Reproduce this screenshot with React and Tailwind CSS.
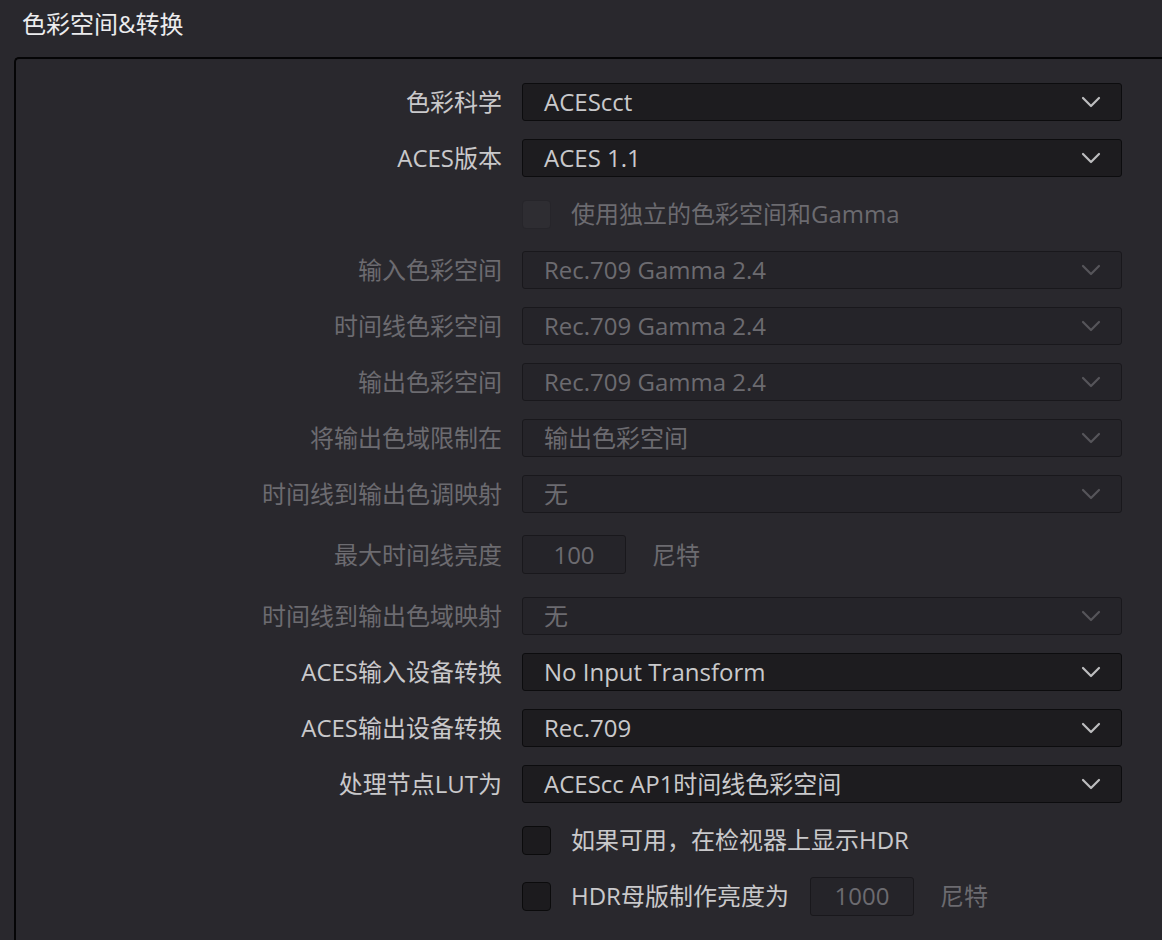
import React from "react";

const FONT = { fontFamily: '"Open Sans", "Noto Sans CJK SC", sans-serif' };

function Chevron({ disabled }) {
  return (
    <svg width="20" height="12" viewBox="0 0 20 12" className="shrink-0">
      <path
        d="M2 2 L10 10 L18 2"
        fill="none"
        stroke={disabled ? "#56555a" : "#bdbdbf"}
        strokeWidth="2.2"
        strokeLinecap="round"
        strokeLinejoin="round"
      />
    </svg>
  );
}

function Select({ value, disabled }) {
  return (
    <div
      className={
        "h-[38px] w-full rounded-[3px] border flex items-center justify-between pl-[21px] pr-[20px] " +
        (disabled
          ? "bg-[#252429] border-[#19181c] text-[#6c6b70]"
          : "bg-[#1d1c1f] border-[#0c0c0e] text-[#c9c9cb]")
      }
    >
      <span className="leading-none">{value}</span>
      <Chevron disabled={disabled} />
    </div>
  );
}

function Checkbox({ disabled }) {
  return (
    <div
      className={
        "w-[29px] h-[29px] rounded-[4px] border shrink-0 " +
        (disabled
          ? "bg-[#2e2d32] border-[#26252a]"
          : "bg-[#1c1b1e] border-[#0b0b0c]")
      }
    />
  );
}

function NumBox({ value, disabled }) {
  return (
    <div
      className={
        "h-[39px] w-[104px] rounded-[3px] border flex items-center justify-center shrink-0 " +
        (disabled
          ? "bg-[#252429] border-[#19181c] text-[#6c6b70]"
          : "bg-[#1d1c1f] border-[#0c0c0e] text-[#c9c9cb]")
      }
    >
      {value}
    </div>
  );
}

function Row({ label, disabled, children, className = "" }) {
  return (
    <div className={"flex items-center h-[38px] " + className}>
      <div
        className={
          "w-[486px] text-right pr-0 shrink-0 whitespace-nowrap " +
          (disabled ? "text-[#6c6b70]" : "text-[#c9c9cb]")
        }
      >
        {label}
      </div>
      <div className="ml-[20px] w-[600px] flex items-center">{children}</div>
    </div>
  );
}

export default function App() {
  return (
    <div
      className="w-[1162px] h-[940px] overflow-hidden bg-[#29282d] text-[24px]"
      style={FONT}
    >
      <div className="h-[57px] pl-[22px] pt-[7px] text-[#ececee] leading-[34px] text-[24px]">
        色彩空间&amp;转换
      </div>
      <div className="ml-[14px] w-[1200px] h-[900px] border-t-[2px] border-l-[2px] border-[#050506] rounded-tl-[5px] bg-[#29282d] pt-[24px] flex flex-col gap-[18px]">
        <Row label="色彩科学">
          <Select value="ACEScct" />
        </Row>
        <Row label="ACES版本">
          <Select value="ACES 1.1" />
        </Row>
        <Row label="">
          <div className="flex items-center gap-[20px] text-[#6c6b70]">
            <Checkbox disabled />
            <span>使用独立的色彩空间和Gamma</span>
          </div>
        </Row>
        <Row label="输入色彩空间" disabled>
          <Select value="Rec.709 Gamma 2.4" disabled />
        </Row>
        <Row label="时间线色彩空间" disabled>
          <Select value="Rec.709 Gamma 2.4" disabled />
        </Row>
        <Row label="输出色彩空间" disabled>
          <Select value="Rec.709 Gamma 2.4" disabled />
        </Row>
        <Row label="将输出色域限制在" disabled>
          <Select value="输出色彩空间" disabled />
        </Row>
        <Row label="时间线到输出色调映射" disabled>
          <Select value="无" disabled />
        </Row>
        <Row label="最大时间线亮度" disabled className="mt-[4px] h-[39px]">
          <NumBox value="100" disabled />
          <span className="ml-[26px] text-[#6c6b70]">尼特</span>
        </Row>
        <Row label="时间线到输出色域映射" disabled className="mt-[5px]">
          <Select value="无" disabled />
        </Row>
        <Row label="ACES输入设备转换">
          <Select value="No Input Transform" />
        </Row>
        <Row label="ACES输出设备转换">
          <Select value="Rec.709" />
        </Row>
        <Row label="处理节点LUT为">
          <Select value="ACEScc AP1时间线色彩空间" />
        </Row>
        <Row label="">
          <div className="flex items-center gap-[20px] text-[#c9c9cb]">
            <Checkbox />
            <span>如果可用，在检视器上显示HDR</span>
          </div>
        </Row>
        <Row label="">
          <div className="flex items-center text-[#c9c9cb]">
            <Checkbox />
            <span className="ml-[20px]">HDR母版制作亮度为</span>
            <div className="ml-[21px]">
              <NumBox value="1000" disabled />
            </div>
            <span className="ml-[26px] text-[#6c6b70]">尼特</span>
          </div>
        </Row>
      </div>
    </div>
  );
}
